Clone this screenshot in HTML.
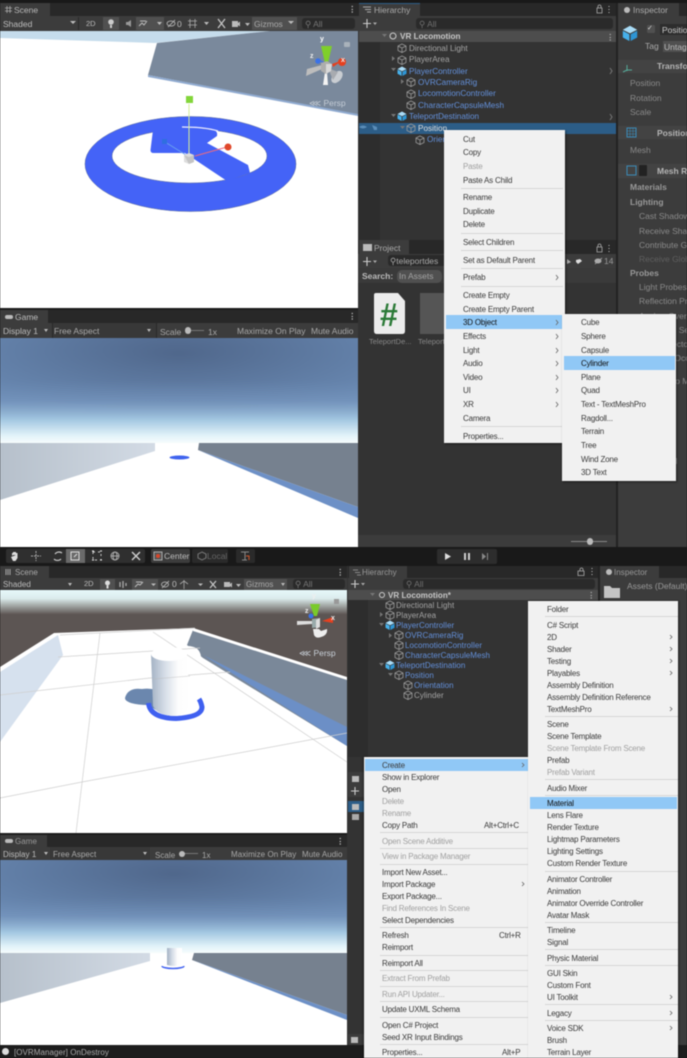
<!DOCTYPE html>
<html><head><meta charset="utf-8">
<style>
html,body{margin:0;padding:0;background:#191919;}
#w{position:relative;width:687px;height:1058px;overflow:hidden;background:#191919;font-family:"Liberation Sans",sans-serif;filter:blur(.5px);}
#w div{position:absolute;}
.t{position:absolute;white-space:nowrap;font-size:8.5px;line-height:12px;height:12px;color:#bdbdbd;letter-spacing:0;}
.b{color:#6390da;}
.w{color:#c4c4c4;}
.d{color:#8a8a8a;}
.h{font-weight:bold;color:#b5b5b5;}
.m{color:#3a3a3a;font-size:8px;letter-spacing:-.2px;margin-top:.7px;}
.g{color:#a0a0a0;}
.s{background:#d6d6d6;height:1px;}
.x{font-size:8.2px;margin-top:.7px;}
.y{font-size:8px;letter-spacing:.05px;margin-top:.7px;}
svg{position:absolute;overflow:visible;}
</style></head><body>
<div id="w">
<svg width="0" height="0" style="position:absolute"><defs>
<g id="wc" fill="none" stroke="#999" stroke-width=".8"><path d="M5 1 9 3v4.500L5 9.500 1 7.500V3zM1 3l4 2 4-2M5 5v4.500"/></g>
<g id="bc"><path d="M5 .5 9.500 3 5 5.200.5 3z" fill="#a9dcf7"/><path d="M.5 3.600 4.600 5.800V10L.5 7.800z" fill="#46b0ea"/><path d="M9.500 3.600 5.400 5.800V10L9.500 7.800z" fill="#2e95d4"/></g>
</defs></svg>

<!-- ========== TOP SCENE ========== -->
<div style="left:0;top:3px;width:358px;height:13px;background:#282828"></div>
<div style="left:0;top:3px;width:50px;height:13px;background:#3c3c3c"></div>
<div style="left:0;top:16px;width:358px;height:15px;background:#3c3c3c"></div>
<span class="t" style="left:14px;top:4px;color:#b8b8b8">Scene</span>
<svg style="left:5px;top:6px" width="7" height="7"><path d="M2 0v7M5 0v7M0 2h7M0 5h7" stroke="#aaa" stroke-width=".8"/></svg>
<span class="t" style="left:348px;top:3px;font-weight:bold">&#8942;</span>
<span class="t" style="left:3px;top:18px">Shaded</span>
<div style="left:70px;top:21px;border:3px solid transparent;border-top:3.500px solid #bbb"></div>
<div style="left:78px;top:17px;width:1px;height:13px;background:#2a2a2a"></div>
<span class="t" style="left:86px;top:18px;font-size:7.500px">2D</span>
<div style="left:103px;top:17px;width:16px;height:13px;background:#505050"></div>
<div style="left:136px;top:17px;width:28px;height:13px;background:#505050"></div>
<div style="left:252px;top:17px;width:45px;height:13px;background:#505050"></div>
<svg style="left:103px;top:17px" width="130" height="13">
<circle cx="8" cy="5" r="2.800" fill="#ccc"/><rect x="7" y="8" width="2" height="3" fill="#ccc"/>
<path d="M23 5h2l3-2v7l-3-2h-2z" fill="#999"/>
<path d="M36 9l3-3 2 2 3-4M37 4h6" stroke="#bbb" fill="none"/>
<path d="M54 5h5l-2.500 3z" fill="#bbb"/>
<ellipse cx="68" cy="6.500" rx="4" ry="2.500" fill="none" stroke="#aaa"/><path d="M65 10l7-7" stroke="#aaa"/>
<path d="M87 2v9M92 2v9M85 4h9M85 8h9" stroke="#aaa" fill="none" stroke-width=".8"/>
<path d="M101 5h5l-2.500 3z" fill="#bbb"/>
<path d="M115 2l7 9M122 2l-7 9" stroke="#c4c4c4" stroke-width="1.300"/>
</svg>
<span class="t" style="left:177px;top:18px">0</span>
<svg style="left:232px;top:20px" width="22" height="8"><rect x="0" y="1" width="6" height="6" fill="#bbb"/><path d="M6 3l2-1.500v5L6 5z" fill="#bbb"/><path d="M13 3h5l-2.500 3z" fill="#bbb"/></svg>
<span class="t" style="left:254px;top:18px;color:#aaa">Gizmos</span>
<div style="left:288px;top:21px;border:3px solid transparent;border-top:3.500px solid #bbb"></div>
<div style="left:302px;top:18px;width:53px;height:11px;background:#2a2a2a;border-radius:3px"></div>
<span class="t" style="left:305px;top:18px;color:#777">&#9906; All</span>

<svg style="left:0;top:31px" width="358" height="277" viewBox="0 31 358 277">
<rect x="0" y="31" width="358" height="277" fill="#fff"/>
<path d="M0 31H270L155 43 0 38z" fill="#c5dcec"/>
<path d="M157 43 148 75 358 115V31H270z" fill="#7a899c"/>
<path d="M148 75 358 114v2L148 77z" fill="#8faad0"/>
<path fill-rule="evenodd" d="M85 164a105.500 47.500 0 1 0 211 0a105.500 47.500 0 1 0-211 0zM112 156a77.500 27 0 1 1 155 0a77.500 27 0 1 1-155 0z" fill="#4463f7" stroke="#5a6a9a" stroke-width=".5"/>
<path d="M153 130 150.500 150q0 3 3 3L185 153 227 181 250 173 248 165 207 143 217 136Q218 130 212 130L182 127z" fill="#4463f7"/>
<path d="M182 127Q205 127 218 131" stroke="#eef" stroke-width="1.200" fill="none"/>
<path d="M189 104V155" stroke="#d4ee98" stroke-width="1"/>
<path d="M165 142 186 155" stroke="#6aa0ee" stroke-width="1"/>
<path d="M195 156 227 147" stroke="#ee6a80" stroke-width="1"/>
<rect x="186" y="96" width="7" height="7" fill="#83d63a"/>
<rect x="162" y="139" width="5" height="5" fill="#2f6fe0"/>
<circle cx="228" cy="147" r="3.500" fill="#e0472a"/>
<path d="M184 155l5-2 5 2v7l-5 2-5-2z" fill="#ddd"/><path d="M184 155l5 2 5-2v7l-5 2z" fill="#c4c4c4"/>
<!-- gizmo -->
<path d="M321 46h11l-4 17h-3z" fill="#7fcf2a"/>
<path d="M343 60 332 64 333 67z" fill="#e5401f"/><circle cx="342" cy="62" r="4" fill="#e5401f"/>
<circle cx="318" cy="61" r="2.800" fill="#3a72e8"/><path d="M318 59l8 4-1 2z" fill="#3a72e8"/>
<path d="M306 76 307 69 322 65 322 69z" fill="#bdbdbd"/>
<path d="M323 85 328 85 327 72 325 72z" fill="#f4f4f4"/>
<ellipse cx="337" cy="77" rx="7" ry="4.500" transform="rotate(-50 337 77)" fill="#c9cdd2"/><path d="M328 68l5 12 5-8z" fill="#a8abb0"/>
<path d="M321 63 327 61 332 64 331 71 326 74 321 71z" fill="#adadad"/><path d="M326 64 332 64 331 71 326 74z" fill="#d8d8d8"/>
<rect x="344" y="42" width="6" height="5" rx="1" fill="#a9b2bb"/>
</svg>
<span class="t" style="left:320px;top:34px;font-size:7px;color:#fff;font-weight:bold">y</span>
<span class="t" style="left:310px;top:51px;font-size:7px;color:#eee;font-weight:bold">z</span>
<span class="t" style="left:341px;top:55px;font-size:7px;color:#eee;font-weight:bold">x</span>
<span class="t" style="left:309px;top:97px;color:#c4ccd6">&#8920; Persp</span>

<!-- ========== TOP GAME ========== -->
<div style="left:0;top:308px;width:358px;height:2px;background:#1c1c1c"></div>
<div style="left:0;top:310px;width:358px;height:13px;background:#282828"></div>
<div style="left:0;top:310px;width:48px;height:13px;background:#3c3c3c"></div>
<div style="left:0;top:323px;width:358px;height:15px;background:#3c3c3c"></div>
<svg style="left:5px;top:314px" width="8" height="6"><rect y="1" width="8" height="4" rx="2" fill="#bbb"/></svg>
<span class="t" style="left:15px;top:311px">Game</span>
<span class="t" style="left:348px;top:310px;font-weight:bold">&#8942;</span>
<span class="t" style="left:3px;top:325px">Display 1</span>
<div style="left:44px;top:329px;border:2.500px solid transparent;border-top:3px solid #bbb"></div>
<div style="left:52px;top:323px;width:103px;height:15px;background:#383838;border-left:1px solid #2a2a2a;border-right:1px solid #2a2a2a"></div>
<span class="t" style="left:54px;top:325px;color:#aaa">Free Aspect</span>
<div style="left:147px;top:329px;border:2.500px solid transparent;border-top:3px solid #bbb"></div>
<span class="t" style="left:160px;top:326px;color:#a8a8a8">Scale</span>
<div style="left:188px;top:330px;width:16px;height:1px;background:#777"></div>
<div style="left:185px;top:327px;width:6px;height:7px;border-radius:4px;background:#bbb"></div>
<span class="t" style="left:208px;top:326px;color:#aaa">1x</span>
<span class="t" style="left:237px;top:325px;color:#a8a8a8">Maximize On Play</span>
<span class="t" style="left:311px;top:325px;color:#a8a8a8">Mute Audio</span>

<svg style="left:0;top:338px" width="358" height="209" viewBox="0 338 358 209">
<defs>
<radialGradient id="sk" cx="50%" cy="15%" r="70%"><stop offset="0" stop-color="#4f668a"/><stop offset="1" stop-color="#6a8ab4"/></radialGradient>
<linearGradient id="sk2" x1="0" y1="0" x2="0" y2="1"><stop offset="0" stop-color="#5a789f" stop-opacity="0"/><stop offset=".4" stop-color="#6b8bb3" stop-opacity=".15"/><stop offset=".6" stop-color="#7898c0" stop-opacity=".7"/><stop offset=".78" stop-color="#a4c8e2"/><stop offset=".93" stop-color="#e2f3f9"/><stop offset="1" stop-color="#f6fcfd"/></linearGradient>
<linearGradient id="lw" x1="0" x2="1" y1="0" y2="0"><stop offset="0" stop-color="#b6c0cb"/><stop offset="1" stop-color="#d3dbe5"/></linearGradient>
<linearGradient id="cy" x1="0" x2="1" y1="0" y2="0"><stop offset="0" stop-color="#a4b2c4"/><stop offset=".35" stop-color="#d5dde7"/><stop offset=".7" stop-color="#fdfdfd"/><stop offset="1" stop-color="#fff"/></linearGradient>
</defs>
<rect x="0" y="338" width="358" height="105" fill="url(#sk)"/>
<rect x="0" y="338" width="358" height="105" fill="url(#sk2)"/>
<rect x="0" y="443" width="358" height="104" fill="#fff"/>
<path d="M0 443H155V451L0 500z" fill="url(#lw)"/>
<path d="M199 443H358V507L198 450z" fill="#76818f"/>
<path d="M198 450 358 507V518z" fill="#6d90c6"/>
<ellipse cx="179.500" cy="457.500" rx="10" ry="2" fill="#3f63ee"/>
</svg>

<!-- ========== TOP HIERARCHY ========== -->
<div style="left:358px;top:3px;width:258px;height:237px;background:#333"></div>
<div style="left:358px;top:3px;width:258px;height:13px;background:#282828"></div>
<div style="left:359px;top:3px;width:61px;height:13px;background:#3c3c3c;border-top:1px solid #2c5d87;box-sizing:border-box"></div>
<div style="left:358px;top:16px;width:258px;height:15px;background:#3c3c3c"></div>
<span class="t" style="left:374px;top:4px;color:#aaa">Hierarchy</span>
<svg style="left:363px;top:6px" width="8" height="7"><path d="M0 1h8M2 3.500h6M4 6h4" stroke="#aaa"/></svg>
<svg style="left:596px;top:4px" width="16" height="10"><path d="M2 4V2.500a1.500 1.500 0 0 1 3 0V4M1 4h5v5H1z" fill="none" stroke="#aaa" stroke-width=".8"/><path d="M13 2v1M13 5v1M13 8v1" stroke="#bbb"/></svg>
<svg style="left:363px;top:19px" width="15" height="9"><path d="M4 0v9M0 4.500h8" stroke="#ccc" stroke-width="1.100"/><path d="M10 3.500h4l-2 2.500z" fill="#aaa"/></svg>
<div style="left:416px;top:18px;width:197px;height:11px;background:#2a2a2a;border-radius:3px"></div>
<span class="t" style="left:419px;top:17.500px;color:#707070">&#9906; All</span>
<div style="left:359px;top:31px;width:257px;height:11px;background:#4d4d4d"></div>
<div style="left:359px;top:42px;width:21px;height:198px;background:#2d2d2d"></div>
<div style="left:359px;top:122.500px;width:257px;height:11.500px;background:#2c5d87"></div>
<span class="t h x" style="left:400px;top:30.500px;color:#c8c8c8">VR Locomotion</span>
<span class="t x" style="left:409px;top:42px;color:#a4a4a4">Directional Light</span>
<span class="t x" style="left:409px;top:53.500px;color:#a4a4a4">PlayerArea</span>
<span class="t b x" style="left:409px;top:65px">PlayerController</span>
<span class="t b x" style="left:418px;top:76px">OVRCameraRig</span>
<span class="t b x" style="left:418px;top:87.500px">LocomotionController</span>
<span class="t b x" style="left:418px;top:99px">CharacterCapsuleMesh</span>
<span class="t b x" style="left:409px;top:110px">TeleportDestination</span>
<span class="t x" style="left:418px;top:122px;color:#dedede">Position</span>
<span class="t b x" style="left:427px;top:133.500px">Orientation</span>
<svg style="left:357px;top:30px" width="260" height="120">
<use href="#wc" x="40" y="13"/><use href="#wc" x="40" y="25"/><use href="#bc" x="40" y="36"/>
<use href="#wc" x="49" y="47"/><use href="#wc" x="49" y="59"/><use href="#wc" x="49" y="70"/>
<use href="#bc" x="40" y="81"/><use href="#wc" x="49" y="93"/><use href="#wc" x="58" y="105"/>
<path d="M25 4h5l-2.500 3zM34 38h5l-2.500 3zM34 84h5l-2.500 3zM43 96h5l-2.500 3z" fill="#777"/>
<path d="M35 26v5l3-2.500zM44 49v5l3-2.500z" fill="#777"/>
<circle cx="36" cy="6" r="3" fill="none" stroke="#ccc"/>
<path d="M2 97q4-3 8 0q-4 3-8 0zM15 95l2 5h3v-3z" fill="#5b8db8"/>
<path d="M253 38l2 3-2 3M253 84l2 3-2 3" stroke="#777" fill="none"/>
</svg>
<span class="t" style="left:606px;top:30.500px;font-weight:bold;color:#aaa">&#8942;</span>

<!-- ========== TOP PROJECT ========== -->
<div style="left:358px;top:240px;width:258px;height:14px;background:#282828"></div>
<div style="left:359px;top:240px;width:50px;height:14px;background:#3c3c3c"></div>
<div style="left:358px;top:254px;width:258px;height:14px;background:#3c3c3c"></div>
<div style="left:358px;top:268px;width:258px;height:15px;background:#3a3a3a"></div>
<div style="left:358px;top:283px;width:258px;height:252px;background:#333"></div>
<div style="left:358px;top:535px;width:258px;height:12px;background:#3c3c3c"></div>
<div style="left:571px;top:541px;width:36px;height:1px;background:#888"></div>
<div style="left:587px;top:538px;width:6px;height:7px;border-radius:4px;background:#bbb"></div>
<div style="left:363px;top:244px;width:9px;height:7px;background:#bbb"></div>
<span class="t" style="left:374px;top:241.500px;color:#aaa">Project</span>
<svg style="left:596px;top:243px" width="16" height="10"><path d="M2 4V2.500a1.500 1.500 0 0 1 3 0V4M1 4h5v5H1z" fill="none" stroke="#aaa" stroke-width=".8"/><path d="M13 2v1M13 5v1M13 8v1" stroke="#bbb"/></svg>
<svg style="left:363px;top:257px" width="15" height="9"><path d="M4 0v9M0 4.500h8" stroke="#ccc" stroke-width="1.100"/><path d="M10 3.500h4l-2 2.500z" fill="#aaa"/></svg>
<div style="left:388px;top:255px;width:60px;height:11px;background:#2a2a2a;border-radius:3px"></div>
<span class="t" style="left:390px;top:255px;color:#aaa">&#9906;teleportdes</span>
<svg style="left:565px;top:257px" width="40" height="9"><path d="M2 2l4 3-4 2z" fill="#aaa"/><path d="M11 3l4-1 2 2-4 3-2-2z" fill="#ddd"/><path d="M30 7l7-6" stroke="#999"/><ellipse cx="33" cy="4" rx="3.500" ry="2.500" fill="#aaa"/></svg>
<span class="t" style="left:604px;top:255px;color:#999">14</span>
<span class="t h" style="left:362px;top:270px;color:#bbb">Search:</span>
<div style="left:397px;top:269.500px;width:45px;height:13px;background:#505050;border-radius:5px"></div>
<span class="t" style="left:399px;top:270px;color:#a4a4a4">In Assets</span>
<svg style="left:374px;top:293px" width="32" height="41"><path d="M2 0H24L31 8V38q0 3-3 3H3q-3 0-3-3V2Q0 0 2 0z" fill="#ececec"/></svg>
<span class="t" style="left:380px;top:293px;font-size:32px;line-height:44px;height:44px;font-weight:bold;color:#2b7a37">#</span>
<div style="left:420px;top:293px;width:30px;height:41px;background:#555"></div>
<span class="t" style="left:369px;top:336px;color:#888;font-size:7.500px">TeleportDe...</span>
<span class="t" style="left:418px;top:336px;color:#888;font-size:7.500px">Teleport</span>

<!-- ========== TOP INSPECTOR ========== -->
<div style="left:616px;top:3px;width:71px;height:544px;background:#3c3c3c;border-left:2px solid #222;box-sizing:border-box"></div>
<div style="left:618px;top:3px;width:69px;height:13px;background:#282828"></div>
<div style="left:618px;top:3px;width:61px;height:13px;background:#3c3c3c"></div>
<span class="t" style="left:633px;top:4px;color:#aaa">Inspector</span>
<div style="left:624px;top:7px;width:6px;height:6px;border-radius:50%;background:#bbb"></div>
<svg style="left:622px;top:25px" width="16" height="16" viewBox="0 0 10 10"><use href="#bc"/></svg>
<div style="left:647px;top:25px;width:8px;height:8px;background:#505050;border-radius:1px"></div>
<span class="t" style="left:647px;top:23px;color:#ddd;font-size:7px">&#10003;</span>
<div style="left:660px;top:24px;width:27px;height:11px;background:#2d2d2d"></div>
<span class="t" style="left:662px;top:24px;color:#ccc">Position</span>
<span class="t" style="left:645px;top:40px;color:#aaa">Tag</span>
<div style="left:663px;top:41px;width:24px;height:11px;background:#505050"></div>
<span class="t" style="left:664px;top:40.500px;color:#bbb">Untagged</span>
<div style="left:618px;top:60px;width:69px;height:13px;background:#434343"></div>
<div style="left:618px;top:126px;width:69px;height:13px;background:#434343"></div>
<div style="left:618px;top:164px;width:69px;height:14px;background:#434343"></div>
<div style="left:618px;top:178px;width:69px;height:215px;background:#3c3c3c"></div>
<svg style="left:620px;top:60px" width="40" height="120">
<path d="M7 5v6M7 10h5M7 10l-4 2" stroke="#5a9" fill="none"/>
<rect x="7" y="68" width="9" height="9" fill="none" stroke="#3b8ab8"/><path d="M7 71h9M7 74h9M10 68v9M13 68v9" stroke="#3b8ab8" stroke-width=".5"/>
<rect x="7" y="106" width="9" height="9" fill="none" stroke="#3b8ab8"/><rect x="19" y="105" width="8" height="11" rx="1" fill="#222"/>
</svg>
<span class="t h" style="left:657px;top:60px">Transform</span>
<span class="t d" style="left:630px;top:77px">Position</span>
<span class="t d" style="left:630px;top:92px">Rotation</span>
<span class="t d" style="left:630px;top:106px">Scale</span>
<span class="t h" style="left:657px;top:126.500px">Position</span>
<span class="t d" style="left:630px;top:144px">Mesh</span>
<span class="t h" style="left:657px;top:165px">Mesh Renderer</span>
<span class="t h" style="left:630px;top:181px;color:#999">Materials</span>
<span class="t h" style="left:630px;top:196px;color:#999">Lighting</span>
<span class="t d" style="left:639px;top:210px">Cast Shadows</span>
<span class="t d" style="left:639px;top:225px">Receive Shadows</span>
<span class="t d" style="left:639px;top:239px">Contribute Global</span>
<span class="t" style="left:639px;top:253px;color:#5f5f5f">Receive Global</span>
<span class="t h" style="left:630px;top:267px;color:#999">Probes</span>
<span class="t d" style="left:639px;top:281px">Light Probes</span>
<span class="t d" style="left:639px;top:295px">Reflection Probes</span>
<span class="t d" style="left:639px;top:310px">Anchor Override</span>
<span class="t d" style="left:639px;top:324px">Additional Settings</span>
<span class="t d" style="left:639px;top:338px">Motion Vectors</span>
<span class="t d" style="left:639px;top:352px">Dynamic Occlusion</span>
<span class="t d" style="left:639px;top:375px">Convert To Mesh</span>
<span class="t d" style="left:639px;top:441px">Ratio</span>
<span class="t d" style="left:639px;top:455px">Shared GI</span>

<!-- ========== TOP CONTEXT MENU ========== -->
<div style="left:444px;top:130px;width:121px;height:313px;background:#f1f1f1;box-shadow:1px 1px 2px rgba(0,0,0,.5)"></div>
<div style="left:446px;top:315px;width:116px;height:14px;background:#90c8f6"></div>
<span class="t m" style="left:463px;top:133px">Cut</span>
<span class="t m" style="left:463px;top:146.500px">Copy</span>
<span class="t m g" style="left:463px;top:160px">Paste</span>
<span class="t m" style="left:463px;top:174px">Paste As Child</span>
<div class="s" style="left:461px;top:188px;width:102px"></div>
<span class="t m" style="left:463px;top:191.500px">Rename</span>
<span class="t m" style="left:463px;top:205px">Duplicate</span>
<span class="t m" style="left:463px;top:218.500px">Delete</span>
<div class="s" style="left:461px;top:233px;width:102px"></div>
<span class="t m" style="left:463px;top:236.500px">Select Children</span>
<div class="s" style="left:461px;top:250px;width:102px"></div>
<span class="t m" style="left:463px;top:254px">Set as Default Parent</span>
<div class="s" style="left:461px;top:268px;width:102px"></div>
<span class="t m" style="left:463px;top:271.500px">Prefab</span>
<div class="s" style="left:461px;top:286px;width:102px"></div>
<span class="t m" style="left:463px;top:289px">Create Empty</span>
<span class="t m" style="left:463px;top:303px">Create Empty Parent</span>
<span class="t m" style="left:463px;top:316.500px;color:#111">3D Object</span>
<span class="t m" style="left:463px;top:330px">Effects</span>
<span class="t m" style="left:463px;top:344px">Light</span>
<span class="t m" style="left:463px;top:357.500px">Audio</span>
<span class="t m" style="left:463px;top:371px">Video</span>
<span class="t m" style="left:463px;top:384.500px">UI</span>
<span class="t m" style="left:463px;top:398px">XR</span>
<span class="t m" style="left:463px;top:412px">Camera</span>
<div class="s" style="left:461px;top:426px;width:102px"></div>
<span class="t m" style="left:463px;top:430px">Properties...</span>
<svg style="left:555px;top:270px" width="6" height="140" fill="none" stroke="#666" stroke-width=".8"><path d="M1 5l2 2.500-2 2.500M1 50l2 2.500-2 2.500M1 64l2 2.500-2 2.500M1 78l2 2.500-2 2.500M1 91l2 2.500-2 2.500M1 105l2 2.500-2 2.500M1 118l2 2.500-2 2.500M1 132l2 2.500-2 2.500"/></svg>

<div style="left:562px;top:314px;width:114px;height:167px;background:#f1f1f1;box-shadow:1px 1px 2px rgba(0,0,0,.5)"></div>
<div style="left:564px;top:356px;width:111px;height:14px;background:#90c8f6"></div>
<span class="t m" style="left:581px;top:316.500px">Cube</span>
<span class="t m" style="left:581px;top:330px">Sphere</span>
<span class="t m" style="left:581px;top:344px">Capsule</span>
<span class="t m" style="left:581px;top:357.500px;color:#111">Cylinder</span>
<span class="t m" style="left:581px;top:371px">Plane</span>
<span class="t m" style="left:581px;top:384.500px">Quad</span>
<span class="t m" style="left:581px;top:398px">Text - TextMeshPro</span>
<span class="t m" style="left:581px;top:412px">Ragdoll...</span>
<span class="t m" style="left:581px;top:425.500px">Terrain</span>
<span class="t m" style="left:581px;top:439px">Tree</span>
<span class="t m" style="left:581px;top:453px">Wind Zone</span>
<span class="t m" style="left:581px;top:466.500px">3D Text</span>

<!-- ========== BOTTOM TOOLBAR ========== -->
<div style="left:0;top:547px;width:687px;height:19px;background:#191919"></div>
<svg style="left:6px;top:549px" width="250" height="15">
<rect x="0" y="0" width="139" height="14" rx="2" fill="#2f2f2f"/>
<rect x="60" y="0" width="19" height="14" fill="#6a6a6a"/>
<rect x="145" y="0" width="39" height="14" rx="2" fill="#3c3c3c"/>
<rect x="186" y="0" width="36" height="14" rx="2" fill="#2a2a2a"/>
<rect x="230" y="0" width="19" height="14" rx="2" fill="#2a2a2a"/>
<path d="M6 7V4h1v2M7 6V3h1.500v3M8.500 6V3H10v3M10 6V4h1.500v5L9.500 12H7L5 8z" fill="#ddd"/>
<path d="M30 2v10M25 7h10" stroke="#aaa" stroke-dasharray="2 1"/>
<path d="M56 4a5 5 0 0 0-7 1M48 10a5 5 0 0 0 7 0" stroke="#ccc" fill="none" stroke-width="1.200"/>
<rect x="65" y="3" width="8" height="8" fill="none" stroke="#ddd"/><path d="M68 8l3-3" stroke="#ddd"/>
<rect x="87" y="3" width="8" height="8" fill="none" stroke="#ccc" stroke-dasharray="2 3"/><path d="M86 2h2M94 2h2M86 11h2M94 11h2" stroke="#eee"/>
<circle cx="109" cy="7" r="4" fill="none" stroke="#aaa"/><ellipse cx="109" cy="7" rx="2" ry="4" fill="none" stroke="#aaa"/><path d="M105 7h8" stroke="#aaa"/>
<path d="M126 3l8 8M134 3l-8 8" stroke="#ccc" stroke-width="1.500"/>
<rect x="148" y="3" width="8" height="8" fill="#555" stroke="#aaa"/><circle cx="152" cy="7" r="2" fill="#d8462a"/>
<path d="M196 3l4 2v4l-4 2-4-2V5z" fill="none" stroke="#777"/>
<path d="M235 3h8M239 3v8M236 11h5" stroke="#888"/><path d="M240 7h3v4" stroke="#d0552a" fill="none"/>
</svg>
<span class="t" style="left:164px;top:550px;color:#bbb">Center</span>
<span class="t" style="left:207px;top:550px;color:#666">Local</span>
<div style="left:437px;top:549px;width:60px;height:15px;background:#2d2d2d;border-radius:2px"></div>
<svg style="left:437px;top:549px" width="60" height="15"><path d="M8 4l6 3.500L8 11z" fill="#ddd"/><rect x="27" y="4" width="2" height="7" fill="#ccc"/><rect x="31" y="4" width="2" height="7" fill="#ccc"/><path d="M45 4l4 3.500-4 3.500z" fill="#888"/><rect x="50" y="4" width="1" height="7" fill="#888"/></svg>

<!-- ========== BOTTOM SCENE ========== -->
<div style="left:0;top:566px;width:347px;height:12px;background:#282828"></div>
<div style="left:0;top:566px;width:49px;height:12px;background:#3c3c3c"></div>
<div style="left:0;top:578px;width:347px;height:12px;background:#3c3c3c"></div>
<span class="t y" style="left:15px;top:566px;color:#aaa">Scene</span>
<svg style="left:5px;top:569px" width="6" height="6"><path d="M1 0v6M3 0v6M5 0v6" stroke="#aaa"/></svg>
<span class="t" style="left:336px;top:566px;font-weight:bold">&#8942;</span>
<span class="t y" style="left:3px;top:578px">Shaded</span>
<div style="left:68px;top:583px;border:2.500px solid transparent;border-top:3px solid #bbb"></div>
<span class="t" style="left:84px;top:578px;font-size:7.500px">2D</span>
<div style="left:100px;top:579px;width:15px;height:11px;background:#505050"></div>
<div style="left:132px;top:579px;width:26px;height:11px;background:#505050"></div>
<div style="left:244px;top:579px;width:43px;height:11px;background:#505050"></div>
<svg style="left:100px;top:579px" width="130" height="11">
<circle cx="7.500" cy="4" r="2.500" fill="#ddd"/><rect x="6.500" y="6.500" width="2" height="3" fill="#ddd"/>
<path d="M20 3v5M23 2v7M26 4v3" stroke="#aaa" stroke-width="1.300"/>
<path d="M35 8l3-3 2 1 3-3M36 3h6" stroke="#bbb" fill="none"/>
<path d="M51 4.500h5L53.500 7z" fill="#bbb"/>
<ellipse cx="65" cy="5.500" rx="3.500" ry="2.500" fill="none" stroke="#aaa"/><path d="M62 9l7-7" stroke="#aaa"/>
<path d="M84 1v9M80 5l4-3 4 3" stroke="#aaa" fill="none" stroke-width=".8"/>
<path d="M98 4.500h5L100.500 7z" fill="#bbb"/>
<path d="M110 2l6 7M116 2l-6 7" stroke="#c4c4c4" stroke-width="1.300"/>
</svg>
<span class="t" style="left:172px;top:578px">0</span>
<svg style="left:224px;top:581px" width="20" height="8"><rect y="1" width="6" height="5" fill="#bbb"/><path d="M6 3l2-1.500v5L6 5z" fill="#bbb"/><path d="M12 3h5l-2.500 3z" fill="#bbb"/></svg>
<span class="t y" style="left:246px;top:578px;color:#aaa">Gizmos</span>
<div style="left:281px;top:583px;border:2.500px solid transparent;border-top:3px solid #bbb"></div>
<div style="left:293px;top:579px;width:52px;height:10px;background:#2a2a2a;border-radius:3px"></div>
<span class="t" style="left:295px;top:578px;color:#777">&#9906; All</span>

<svg style="left:0;top:590px" width="347" height="243" viewBox="0 590 347 243">
<defs><linearGradient id="s3" x1="0" y1="0" x2="0" y2="1"><stop offset="0" stop-color="#e6f8fa"/><stop offset=".35" stop-color="#dceced"/><stop offset=".65" stop-color="#a3a8a6"/><stop offset="1" stop-color="#625b59"/></linearGradient></defs>
<rect x="0" y="590" width="347" height="24" fill="url(#s3)"/>
<rect x="0" y="614" width="347" height="93" fill="#5c5553"/>
<path d="M0 667 54 633 193 628 347 678V833H0z" fill="#fff"/>
<path d="M58 635 63 655 0 742V672z" fill="#d6e1ee"/>
<path d="M193 630 347 679V746L203 658 187 645z" fill="#7a8899"/>
<path d="M203 655 347 727V746z" fill="#6c8fc6"/>
<path d="M193 628 347 677v3L193 631z" fill="#fff"/>
<path d="M187 646Q200 646 201 657L187 650z" fill="#fff"/>
<g stroke="#cfcfcf" stroke-width=".7" fill="none">
<path d="M100 633 76 833"/><path d="M58 657 200 648"/><path d="M0 695 150 678 230 672"/><path d="M0 798 82 782 347 733"/>
<path d="M153 632 347 762"/><path d="M60 635 195 628"/>
</g>
<path d="M125 698Q128 687 142 689 150 688 156 690L156 710 148 705Q138 705 131 703 125 701 125 698z" fill="#6b87ae"/>
<path d="M148.500 703Q150 718 176 718.500 202 717 202 707 201 702 199 699" fill="none" stroke="#3f60f0" stroke-width="5"/>
<path d="M151 654 153 706Q158 716 176 716 186 715 190 706L187 654z" fill="url(#cy)"/>
<ellipse cx="169" cy="654" rx="18" ry="7" fill="#fff"/>
<path d="M153 679 190 676" stroke="#bbb" stroke-width=".4"/>
<!-- gizmo -->
<path d="M310 604h10l-3 12h-3z" fill="#79ca2a"/>
<path d="M333 617 322 621 333 623z" fill="#e5401f"/>
<circle cx="311" cy="616" r="2.500" fill="#3a72e8"/>
<path d="M297 625 297 621 312 621 312 624z" fill="#ddd"/>
<path d="M312 619 320 618 320 627 312 628z" fill="#9aa"/><path d="M316 620 320 618 320 627 316 629z" fill="#ddd"/>
<path d="M313 629 319 629 321 631 327 629Q328 635 321 637 316 639 314 635z" fill="#eee"/>
<rect x="334" y="599" width="5" height="5" fill="#999"/>
</svg>
<span class="t" style="left:312px;top:591px;font-size:7px;color:#eee;font-weight:bold">y</span>
<span class="t" style="left:305px;top:606px;font-size:7px;color:#eee;font-weight:bold">z</span>
<span class="t" style="left:331px;top:613px;font-size:7px;color:#eee;font-weight:bold">x</span>
<span class="t" style="left:299px;top:647px;color:#c9d0d8">&#8920; Persp</span>

<!-- ========== BOTTOM GAME ========== -->
<div style="left:0;top:833px;width:347px;height:2px;background:#1c1c1c"></div>
<div style="left:0;top:835px;width:347px;height:12px;background:#282828"></div>
<div style="left:0;top:835px;width:47px;height:12px;background:#3c3c3c"></div>
<div style="left:0;top:847px;width:347px;height:13px;background:#3c3c3c"></div>
<svg style="left:5px;top:838px" width="8" height="6"><rect y="1" width="8" height="4" rx="2" fill="#bbb"/></svg>
<span class="t y" style="left:15px;top:835px;color:#999">Game</span>
<span class="t" style="left:336px;top:835px;font-weight:bold">&#8942;</span>
<span class="t y" style="left:3px;top:848px">Display 1</span>
<div style="left:44px;top:852px;border:2.500px solid transparent;border-top:3px solid #bbb"></div>
<div style="left:50px;top:847px;width:100px;height:13px;background:#383838"></div>
<span class="t y" style="left:53px;top:848px;color:#aaa">Free Aspect</span>
<div style="left:143px;top:852px;border:2.500px solid transparent;border-top:3px solid #bbb"></div>
<span class="t y" style="left:155px;top:849px;color:#a8a8a8">Scale</span>
<div style="left:183px;top:853px;width:15px;height:1px;background:#777"></div>
<div style="left:179px;top:851px;width:6px;height:6px;border-radius:4px;background:#bbb"></div>
<span class="t y" style="left:202px;top:849px;color:#aaa">1x</span>
<span class="t y" style="left:231px;top:848px;color:#a8a8a8">Maximize On Play</span>
<span class="t y" style="left:302px;top:848px;color:#a8a8a8">Mute Audio</span>

<svg style="left:0;top:860px" width="347" height="185" viewBox="0 860 347 185">
<rect x="0" y="860" width="347" height="93" fill="url(#sk)"/>
<rect x="0" y="860" width="347" height="93" fill="url(#sk2)"/>
<rect x="0" y="953" width="347" height="92" fill="#fff"/>
<path d="M0 953H150V961L0 1003z" fill="url(#lw)"/>
<path d="M194 953H347V1015L192 960z" fill="#76818f"/>
<path d="M192 960 347 1015V1020z" fill="#6d90c6"/>
<path d="M162 966a11 2.500 0 0 0 22 0" fill="none" stroke="#3f60f0" stroke-width="1.500"/>
<path d="M167 948V965q7 2 15 0V948z" fill="url(#cy)"/>
</svg>

<!-- ========== BOTTOM HIERARCHY ========== -->
<div style="left:347px;top:566px;width:251px;height:480px;background:#333"></div>
<div style="left:348px;top:566px;width:250px;height:12px;background:#282828"></div>
<div style="left:349px;top:566px;width:58px;height:12px;background:#3c3c3c"></div>
<div style="left:348px;top:578px;width:250px;height:12px;background:#3c3c3c"></div>
<span class="t y" style="left:362px;top:566px;color:#999">Hierarchy</span>
<svg style="left:353px;top:569px" width="8" height="7"><path d="M0 1h5M2 3.500h5M4 6h4" stroke="#888"/></svg>
<svg style="left:577px;top:567px" width="18" height="10"><path d="M3 4V2.500a1.500 1.500 0 0 1 3 0V4M1 4h6v4.500H1z" fill="none" stroke="#aaa" stroke-width=".8"/><path d="M15 1v1M15 4v1M15 7v1" stroke="#bbb"/></svg>
<svg style="left:351px;top:580px" width="15" height="9"><path d="M4 0v8M0 4h8" stroke="#ccc" stroke-width="1.100"/><path d="M10 3h4l-2 2.500z" fill="#aaa"/></svg>
<div style="left:403px;top:579px;width:192px;height:10px;background:#2a2a2a;border-radius:3px"></div>
<span class="t" style="left:406px;top:578px;color:#707070">&#9906; All</span>
<div style="left:348px;top:590px;width:250px;height:10px;background:#4d4d4d"></div>
<div style="left:348px;top:600px;width:20px;height:157px;background:#2d2d2d"></div>
<span class="t h y" style="left:388px;top:589px;color:#c8c8c8">VR Locomotion*</span>
<span class="t y" style="left:396px;top:599px;color:#a4a4a4">Directional Light</span>
<span class="t y" style="left:396px;top:609px;color:#a4a4a4">PlayerArea</span>
<span class="t b y" style="left:396px;top:619px">PlayerController</span>
<span class="t b y" style="left:405px;top:629.500px">OVRCameraRig</span>
<span class="t b y" style="left:405px;top:639px">LocomotionController</span>
<span class="t b y" style="left:405px;top:649px">CharacterCapsuleMesh</span>
<span class="t b y" style="left:396px;top:659px">TeleportDestination</span>
<span class="t b y" style="left:405px;top:669px">Position</span>
<span class="t b y" style="left:414px;top:679px">Orientation</span>
<span class="t y" style="left:414px;top:689px;color:#a4a4a4">Cylinder</span>
<svg style="left:345px;top:590px" width="250" height="115">
<use href="#wc" x="40" y="10"/><use href="#wc" x="40" y="20"/><use href="#bc" x="40" y="30"/>
<use href="#wc" x="49" y="40"/><use href="#wc" x="49" y="50"/><use href="#wc" x="49" y="60"/>
<use href="#bc" x="40" y="70"/><use href="#wc" x="49" y="80"/><use href="#wc" x="58" y="90"/><use href="#wc" x="58" y="100"/>
<path d="M25 3h5l-2.500 3zM34 33h5l-2.500 3zM34 73h5l-2.500 3zM43 83h5l-2.500 3z" fill="#777"/>
<path d="M35 22v5l3-2.500zM44 43v5l3-2.500z" fill="#777"/>
<circle cx="37" cy="5" r="2.500" fill="none" stroke="#ccc"/>
</svg>
<span class="t" style="left:587px;top:589px;font-weight:bold;color:#aaa">&#8942;</span>

<!-- project strip -->
<div style="left:348px;top:772px;width:18px;height:12px;background:#3c3c3c"></div>
<div style="left:348px;top:784px;width:18px;height:13px;background:#3c3c3c"></div>
<div style="left:352px;top:776px;width:7px;height:6px;background:#bbb"></div>
<svg style="left:351px;top:787px" width="9" height="9"><path d="M4 0v8M0 4h8" stroke="#ccc" stroke-width="1.100"/></svg>
<div style="left:348px;top:801px;width:16px;height:11px;background:#2c5d87"></div>
<div style="left:352px;top:804px;width:7px;height:6px;background:#bbb"></div>
<div style="left:352px;top:814px;width:7px;height:6px;background:#aaa"></div>
<div style="left:348px;top:1034px;width:16px;height:12px;background:#3c3c3c"></div>
<div style="left:351px;top:1037px;width:7px;height:6px;background:#bbb"></div>

<!-- bottom inspector -->
<div style="left:598px;top:566px;width:89px;height:480px;background:#3c3c3c;border-left:2px solid #222;box-sizing:border-box"></div>
<div style="left:600px;top:566px;width:87px;height:12px;background:#282828"></div>
<div style="left:600px;top:566px;width:59px;height:12px;background:#3c3c3c"></div>
<div style="left:606px;top:569px;width:6px;height:6px;border-radius:50%;background:#bbb"></div>
<span class="t y" style="left:614px;top:566px;color:#999">Inspector</span>
<svg style="left:604px;top:585px" width="16" height="13"><path d="M0 1h6l2 2h8v10H0z" fill="#c4c4c4"/></svg>
<span class="t" style="left:627px;top:580px;color:#999">Assets (Default)</span>

<!-- status -->
<div style="left:0;top:1045px;width:687px;height:13px;background:#1d1d1d"></div>
<div style="left:2px;top:1048px;width:7px;height:7px;border-radius:50%;background:#ddd"></div>
<span class="t y" style="left:14px;top:1046px;color:#aaa">[OVRManager] OnDestroy</span>

<!-- ========== BOTTOM MENU 1 ========== -->
<div style="left:364px;top:757px;width:166px;height:301px;background:#f1f1f1;box-shadow:-1px 0 2px rgba(0,0,0,.4)"></div>
<div style="left:365px;top:759px;width:163px;height:12px;background:#90c8f6"></div>
<span class="t m" style="left:382px;top:759px">Create</span>
<span class="t m" style="left:382px;top:771px">Show in Explorer</span>
<span class="t m" style="left:382px;top:783px">Open</span>
<span class="t m g" style="left:382px;top:795px">Delete</span>
<span class="t m g" style="left:382px;top:807px">Rename</span>
<span class="t m" style="left:382px;top:819px">Copy Path</span>
<span class="t m" style="left:484px;top:819px">Alt+Ctrl+C</span>
<div class="s" style="left:380px;top:832px;width:150px"></div>
<span class="t m g" style="left:382px;top:835px">Open Scene Additive</span>
<div class="s" style="left:380px;top:848px;width:150px"></div>
<span class="t m g" style="left:382px;top:850px">View in Package Manager</span>
<div class="s" style="left:380px;top:864px;width:150px"></div>
<span class="t m" style="left:382px;top:866px">Import New Asset...</span>
<span class="t m" style="left:382px;top:878px">Import Package</span>
<span class="t m" style="left:382px;top:890px">Export Package...</span>
<span class="t m g" style="left:382px;top:902px">Find References In Scene</span>
<span class="t m" style="left:382px;top:914px">Select Dependencies</span>
<div class="s" style="left:380px;top:927px;width:150px"></div>
<span class="t m" style="left:382px;top:929px">Refresh</span>
<span class="t m" style="left:499px;top:929px">Ctrl+R</span>
<span class="t m" style="left:382px;top:941px">Reimport</span>
<div class="s" style="left:380px;top:955px;width:150px"></div>
<span class="t m" style="left:382px;top:957px">Reimport All</span>
<div class="s" style="left:380px;top:970px;width:150px"></div>
<span class="t m g" style="left:382px;top:972px">Extract From Prefab</span>
<div class="s" style="left:380px;top:986px;width:150px"></div>
<span class="t m g" style="left:382px;top:988px">Run API Updater...</span>
<div class="s" style="left:380px;top:1001px;width:150px"></div>
<span class="t m" style="left:382px;top:1003px">Update UXML Schema</span>
<div class="s" style="left:380px;top:1017px;width:150px"></div>
<span class="t m" style="left:382px;top:1019px">Open C# Project</span>
<span class="t m" style="left:382px;top:1031px">Seed XR Input Bindings</span>
<div class="s" style="left:380px;top:1044px;width:150px"></div>
<span class="t m" style="left:382px;top:1046px">Properties...</span>
<span class="t m" style="left:502px;top:1046px">Alt+P</span>
<svg style="left:521px;top:760px" width="6" height="135" fill="none" stroke="#666" stroke-width=".8"><path d="M1 3l2 2-2 2M1 122l2 2-2 2"/></svg>

<!-- ========== BOTTOM MENU 2 ========== -->
<div style="left:528px;top:601px;width:150px;height:457px;background:#f1f1f1;box-shadow:1px 0 2px rgba(0,0,0,.4)"></div>
<div style="left:530px;top:797px;width:147px;height:12px;background:#90c8f6"></div>
<span class="t m" style="left:547px;top:603px">Folder</span>
<div class="s" style="left:545px;top:616px;width:133px"></div>
<span class="t m" style="left:547px;top:619px">C# Script</span>
<span class="t m" style="left:547px;top:631px">2D</span>
<span class="t m" style="left:547px;top:643px">Shader</span>
<span class="t m" style="left:547px;top:655px">Testing</span>
<span class="t m" style="left:547px;top:667px">Playables</span>
<span class="t m" style="left:547px;top:679px">Assembly Definition</span>
<span class="t m" style="left:547px;top:691px">Assembly Definition Reference</span>
<span class="t m" style="left:547px;top:703px">TextMeshPro</span>
<div class="s" style="left:545px;top:716px;width:133px"></div>
<span class="t m" style="left:547px;top:718px">Scene</span>
<span class="t m" style="left:547px;top:730px">Scene Template</span>
<span class="t m g" style="left:547px;top:742px">Scene Template From Scene</span>
<span class="t m" style="left:547px;top:754px">Prefab</span>
<span class="t m g" style="left:547px;top:766px">Prefab Variant</span>
<div class="s" style="left:545px;top:779px;width:133px"></div>
<span class="t m" style="left:547px;top:782px">Audio Mixer</span>
<div class="s" style="left:545px;top:795px;width:133px"></div>
<span class="t m" style="left:547px;top:797px;color:#111">Material</span>
<span class="t m" style="left:547px;top:809px">Lens Flare</span>
<span class="t m" style="left:547px;top:821px">Render Texture</span>
<span class="t m" style="left:547px;top:833px">Lightmap Parameters</span>
<span class="t m" style="left:547px;top:845px">Lighting Settings</span>
<span class="t m" style="left:547px;top:857px">Custom Render Texture</span>
<div class="s" style="left:545px;top:871px;width:133px"></div>
<span class="t m" style="left:547px;top:873px">Animator Controller</span>
<span class="t m" style="left:547px;top:885px">Animation</span>
<span class="t m" style="left:547px;top:897px">Animator Override Controller</span>
<span class="t m" style="left:547px;top:909px">Avatar Mask</span>
<div class="s" style="left:545px;top:922px;width:133px"></div>
<span class="t m" style="left:547px;top:924px">Timeline</span>
<span class="t m" style="left:547px;top:936px">Signal</span>
<div class="s" style="left:545px;top:949px;width:133px"></div>
<span class="t m" style="left:547px;top:952px">Physic Material</span>
<div class="s" style="left:545px;top:965px;width:133px"></div>
<span class="t m" style="left:547px;top:967px">GUI Skin</span>
<span class="t m" style="left:547px;top:979px">Custom Font</span>
<span class="t m" style="left:547px;top:991px">UI Toolkit</span>
<div class="s" style="left:545px;top:1004px;width:133px"></div>
<span class="t m" style="left:547px;top:1007px">Legacy</span>
<div class="s" style="left:545px;top:1020px;width:133px"></div>
<span class="t m" style="left:547px;top:1022px">Voice SDK</span>
<span class="t m" style="left:547px;top:1034px">Brush</span>
<span class="t m" style="left:547px;top:1046px">Terrain Layer</span>
<svg style="left:669px;top:630px" width="6" height="405" fill="none" stroke="#666" stroke-width=".8"><path d="M1 5l2 2-2 2M1 17l2 2-2 2M1 29l2 2-2 2M1 41l2 2-2 2M1 77l2 2-2 2M1 365l2 2-2 2M1 381l2 2-2 2M1 396l2 2-2 2"/></svg>
</div>
</body></html>
